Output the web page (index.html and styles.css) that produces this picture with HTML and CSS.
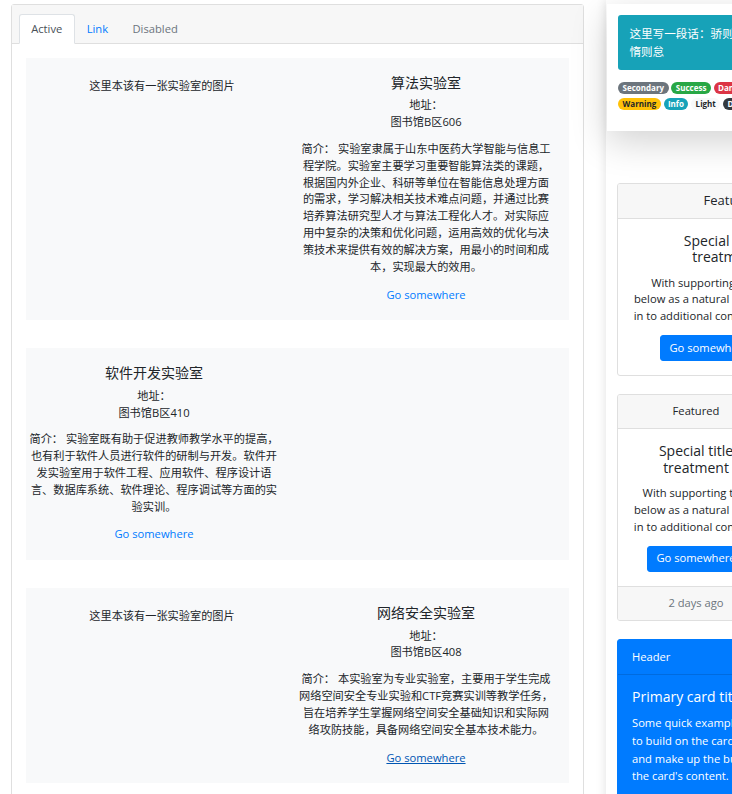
FILE: index.html
```html
<!DOCTYPE html>
<html lang="zh-CN">
    <head>
        <meta charset="utf-8">
        <title>实验室介绍</title>
        <link rel="stylesheet" href="styles.css">
    </head>
    <body>
        <div class="page">
            <div class="labs">
                <div class="labs-head">
                    <ul class="tabs">
                        <li><a href="#" class="tab active">Active</a></li>
                        <li><a href="#" class="tab">Link</a></li>
                        <li><a href="#" class="tab disabled">Disabled</a></li>
                    </ul>
                </div>
                <div class="labs-body">
                    <div class="lab">
                        <div class="lab-pic">这里本该有一张实验室的图片</div>
                        <div class="lab-info">
                            <h5>算法实验室</h5>
                            <p class="addr">地址：<br>图书馆B区606</p>
                            <p class="desc">简介： 实验室隶属于山东中医药大学智能与信息工程学院。实验室主要学习重要智能算法类的课题，根据国内外企业、科研等单位在智能信息处理方面的需求，学习解决相关技术难点问题，并通过比赛培养算法研究型人才与算法工程化人才。对实际应用中复杂的决策和优化问题，运用高效的优化与决策技术来提供有效的解决方案，用最小的时间和成本，实现最大的效用。</p>
                            <a href="#" class="more">Go somewhere</a>
                        </div>
                    </div>
                    <div class="lab">
                        <div class="lab-info">
                            <h5>软件开发实验室</h5>
                            <p class="addr">地址：<br>图书馆B区410</p>
                            <p class="desc">简介： 实验室既有助于促进教师教学水平的提高，也有利于软件人员进行软件的研制与开发。软件开发实验室用于软件工程、应用软件、程序设计语言、数据库系统、软件理论、程序调试等方面的实验实训。</p>
                            <a href="#" class="more">Go somewhere</a>
                        </div>
                    </div>
                    <div class="lab">
                        <div class="lab-pic">这里本该有一张实验室的图片</div>
                        <div class="lab-info">
                            <h5>网络安全实验室</h5>
                            <p class="addr">地址：<br>图书馆B区408</p>
                            <p class="desc">简介： 本实验室为专业实验室，主要用于学生完成网络空间安全专业实验和CTF竞赛实训等教学任务，旨在培养学生掌握网络空间安全基础知识和实际网络攻防技能，具备网络空间安全基本技术能力。</p>
                            <a href="#" class="more hover">Go somewhere</a>
                        </div>
                    </div>
                </div>
            </div>

            <div class="side">
                <div class="motto">
                    <div class="alert">这里写一段话：骄则败，勤则进，惰则怠</div>
                    <div class="badges">
                        <span class="badge b-secondary">Secondary</span>
                        <span class="badge b-success">Success</span>
                        <span class="badge b-danger">Danger</span><br>
                        <span class="badge b-warning">Warning</span>
                        <span class="badge b-info">Info</span>
                        <span class="badge b-light">Light</span>
                        <span class="badge b-dark">Dark</span>
                    </div>
                </div>

                <div class="card card-right">
                    <div class="card-head">Featured</div>
                    <div class="card-body">
                        <h5>Special title treatment</h5>
                        <p>With supporting text below as a natural lead-in to additional content.</p>
                        <a href="#" class="btn">Go somewhere</a>
                    </div>
                </div>

                <div class="card card-center">
                    <div class="card-head">Featured</div>
                    <div class="card-body">
                        <h5>Special title treatment</h5>
                        <p>With supporting text below as a natural lead-in to additional content.</p>
                        <a href="#" class="btn">Go somewhere</a>
                    </div>
                    <div class="card-foot">2 days ago</div>
                </div>

                <div class="card card-primary">
                    <div class="card-head">Header</div>
                    <div class="card-body">
                        <h5>Primary card title</h5>
                        <p>Some quick example text to build on the card title and make up the bulk of the card's content.</p>
                    </div>
                </div>
            </div>
        </div>
    </body>
</html>
```

FILE: styles.css
```css
*{
    box-sizing: border-box;
}
html, body{
    overflow: hidden;
}
body{
    margin: 0;
    background: #fff;
    color: #212529;
    font-family: "Open Sans", "Noto Sans CJK SC", sans-serif;
    font-size: 11.2px;
    line-height: 1.5;
}
.page{
    display: flex;
    align-items: flex-start;
    padding-left: 11px;
}

/* left: lab list */
.labs{
    flex: none;
    width: 573px;
    min-height: 830px;
    margin-top: 4px;
    border: 1px solid #dfdfdf;
    border-radius: 3px;
}
.labs-head{
    background: #f7f7f7;
    border-bottom: 1px solid #dfdfdf;
    padding: 9px 14px 0;
}
.tabs{
    display: flex;
    list-style: none;
    margin: 0 -7px -1px;
    padding: 0;
}
.tab{
    display: block;
    padding: 5.6px 11.2px;
    border: 1px solid transparent;
    border-radius: 3px 3px 0 0;
    color: #007bff;
    text-decoration: none;
}
.tab.active{
    background: #fff;
    color: #495057;
    border-color: #dee2e6 #dee2e6 #fff;
}
.tab.disabled{
    color: #6c757d;
}
.labs-body{
    padding: 14px;
}
.lab{
    display: grid;
    grid-template-columns: 272px 272px;
    background: #f8f9fa;
    margin-bottom: 28px;
}
.lab-pic{
    padding-top: 20px;
    text-align: center;
}
.lab-info{
    padding: 17px 16px 17px 0;
    text-align: center;
}
.lab-info h5{
    margin: 0 0 5.6px;
    font-size: 14px;
    font-weight: 400;
    line-height: 1.2;
}
.addr{
    margin: 0 0 10px;
}
.desc{
    margin: 0 0 11.2px;
}
.more{
    color: #007bff;
    text-decoration: none;
}
.more.hover{
    color: #0056b3;
    text-decoration: underline;
}

/* right: side column */
.side{
    flex: none;
    width: 240px;
    min-height: 830px;
    margin-left: 22px;
    padding: 4px 0 0 11px;
    background: #fff;
    box-shadow: 0 0 10px rgba(0,0,0,.12);
}
.motto{
    width: 221px;
    margin: 0 0 52px -10px;
    padding: 11.2px 11.2px 19.6px;
    background: #fff;
    box-shadow: 0 11px 34px rgba(0,0,0,.175);
}
.alert{
    margin-bottom: 9px;
    padding: 10px 11.2px;
    background: #17a2b8;
    color: #fff;
    border-radius: 3px;
    font-size: 11.6px;
    line-height: 17.6px;
}
.badges{
    line-height: 16px;
}
.badge{
    display: inline-block;
    padding: 2.1px 4.4px;
    border-radius: 10px;
    font-size: 8px;
    font-weight: 700;
    line-height: 1;
    color: #fff;
}
.b-secondary{ background: #6c757d; }
.b-success{ background: #28a745; }
.b-danger{ background: #dc3545; }
.b-warning{ background: #ffc107; color: #212529; }
.b-info{ background: #17a2b8; }
.b-light{ background: #f8f9fa; color: #212529; }
.b-dark{ background: #343a40; }

.card{
    width: 158px;
    margin-bottom: 18px;
    background: #fff;
    border: 1px solid #dfdfdf;
    border-radius: 3px;
    overflow: hidden;
}
.card-head{
    padding: 8.4px 14px;
    background: #f7f7f7;
    border-bottom: 1px solid #dfdfdf;
    line-height: 16.8px;
}
.card-body{
    padding: 14px;
}
.card-body h5{
    margin: 0 0 8.4px;
    font-size: 14px;
    font-weight: 400;
    line-height: 1.2;
}
.card-body p{
    margin: 0 0 10px;
}
.card-foot{
    padding: 8.4px 14px;
    background: #f7f7f7;
    border-top: 1px solid #dfdfdf;
    color: #6c757d;
}
.btn{
    display: inline-block;
    padding: 3.6px 8.4px;
    background: #007bff;
    border: 1px solid #007bff;
    border-radius: 3px;
    color: #fff;
    text-decoration: none;
    line-height: 16.8px;
}
.card-right{
    width: 156px;
    text-align: right;
}
.card-right .card-head{
    font-size: 13px;
}
.card-center{
    text-align: center;
}
.card-primary{
    width: 165px;
    background: #007bff;
    border-color: #007bff;
    color: #fff;
}
.card-primary .card-head{
    background: transparent;
    border-bottom-color: rgba(0,0,0,.125);
}
.card-primary p{
    line-height: 17.7px;
}
```
